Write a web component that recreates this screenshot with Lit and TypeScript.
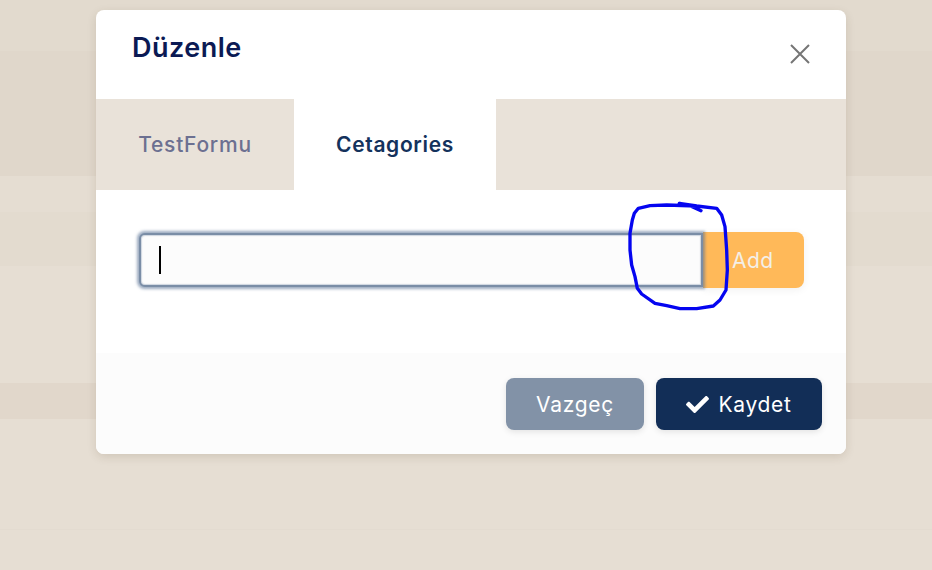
import { LitElement, html, css } from "lit";
import { customElement } from "lit/decorators.js";

@customElement("app-root")
export class AppRoot extends LitElement {
  static styles = css`
    :host { display: block; position: relative; width: 932px; height: 570px; overflow: hidden; font-family: "Inter", "Liberation Sans", sans-serif; background: #e6ded3; }
    .bands { display: flex; flex-direction: column; height: 570px; }
    .b1 { height: 51px; background: #e2dace; }
    .b2 { height: 125px; background: #e0d7cb; }
    .b3 { height: 36px; background: #e5ddd2; }
    .b4 { height: 54px; background: #e3dbcf; }
    .b5 { height: 117px; background: #e6ded3; }
    .b6 { height: 36px; background: #e1d7cb; }
    .b7 { height: 110px; background: #e6ded3; border-bottom: 1px solid #e3dbd0; }
    .modal { position: absolute; left: 96px; top: 10px; width: 750px; height: 444px; border-radius: 8px; background: #fff; box-shadow: 0 3px 10px rgba(80, 60, 30, 0.14); display: flex; flex-direction: column; overflow: hidden; }
    .head { height: 89px; flex: none; display: flex; justify-content: space-between; box-sizing: border-box; padding: 22px 36px; }
    h1 { margin: 0; font-size: 27px; line-height: 32px; font-weight: 600; color: #0b1a54; letter-spacing: 0.5px; }
    .close { width: 20px; height: 20px; margin: 12px 0 0 0; display: block; }
    .tabs { height: 91px; flex: none; display: flex; background: #e9e2d9; }
    .tab { display: flex; align-items: center; justify-content: center; font-size: 21px; font-weight: 500; color: #6c7091; width: 198px; letter-spacing: 0.75px; }
    .tab.on { width: 202px; background: #fff; color: #14325c; font-weight: 600; letter-spacing: 0.65px; }
    .body { height: 163px; flex: none; box-sizing: border-box; padding: 42px 42px 0 43px; display: flex; align-items: flex-start; }
    .field { width: 564px; height: 54px; margin-top: 1px; box-sizing: border-box; background: #fcfcfc; border: 2px solid #7a8da6; border-radius: 6px 0 0 6px; box-shadow: 0 0 3px 1.5px rgba(90, 115, 150, 0.6), inset 0 0 1px 1px rgba(120, 140, 170, 0.35); display: flex; align-items: center; padding-left: 18px; position: relative; z-index: 1; }
    .caret { width: 2px; height: 28px; background: #000; }
    .add { width: 101px; height: 56px; background: #ffb959; border-radius: 0 8px 8px 0; color: #f4efe7; font-size: 21px; letter-spacing: 0.5px; display: flex; align-items: center; box-sizing: border-box; padding-left: 29px; box-shadow: 0 2px 8px rgba(0,0,0,.06); }
    .foot { flex: 1; background: #fcfcfc; display: flex; justify-content: flex-end; gap: 12px; padding: 25px 24px 0 0; }
    .btn { height: 52px; border-radius: 8px; color: #fff; font-size: 21px; letter-spacing: 0.7px; font-weight: 400; display: flex; align-items: center; justify-content: center; gap: 9px; box-shadow: 0 2px 6px rgba(0,0,0,.1); }
    .cancel { width: 138px; background: #8292a7; }
    .save { width: 166px; background: #122e57; }
    .check { width: 23px; height: 23px; fill: #fff; }
    .scribble { position: absolute; left: 600px; top: 190px; width: 240px; height: 130px; z-index: 5; pointer-events: none; }
  `;

  render() {
    return html`
      <div class="bands">
        <div class="b1"></div><div class="b2"></div><div class="b3"></div><div class="b4"></div><div class="b5"></div><div class="b6"></div><div class="b7"></div>
      </div>
      <div class="modal">
        <div class="head">
          <h1>Düzenle</h1>
          <svg class="close" viewBox="0 0 20 20"><path d="M1 1 L19 19 M19 1 L1 19" stroke="#757575" stroke-width="2" fill="none"/></svg>
        </div>
        <div class="tabs">
          <div class="tab">TestFormu</div>
          <div class="tab on">Cetagories</div>
        </div>
        <div class="body">
          <div class="field"><span class="caret"></span></div>
          <div class="add">Add</div>
        </div>
        <div class="foot">
          <div class="btn cancel">Vazgeç</div>
          <div class="btn save">
            <svg class="check" viewBox="0 0 512 512"><path d="M173.898 439.404l-166.4-166.4c-9.997-9.997-9.997-26.206 0-36.204l36.203-36.204c9.997-9.998 26.207-9.998 36.204 0L192 312.69 432.095 72.596c9.997-9.997 26.207-9.997 36.204 0l36.203 36.204c9.997 9.997 9.997 26.206 0 36.204l-294.4 294.401c-9.998 9.997-26.207 9.997-36.204-.001z"/></svg>
            Kaydet
          </div>
        </div>
      </div>
      <svg class="scribble" viewBox="0 0 720 390"><path d="M303 62 L270 47 L238 40 L290 48 L350 55 L365 75 L375 110 L380 180 L382 240 L378 300 L360 330 L340 348 L290 356 L240 356 L200 347 L165 340 L125 312 L112 295 L105 260 L95 225 L90 180 L90 130 L97 90 L103 70 L115 55 L150 47 L200 45 L290 48" fill="none" stroke="#0505f0" stroke-width="10" stroke-linejoin="round" stroke-linecap="round"/></svg>
    `;
  }
}
